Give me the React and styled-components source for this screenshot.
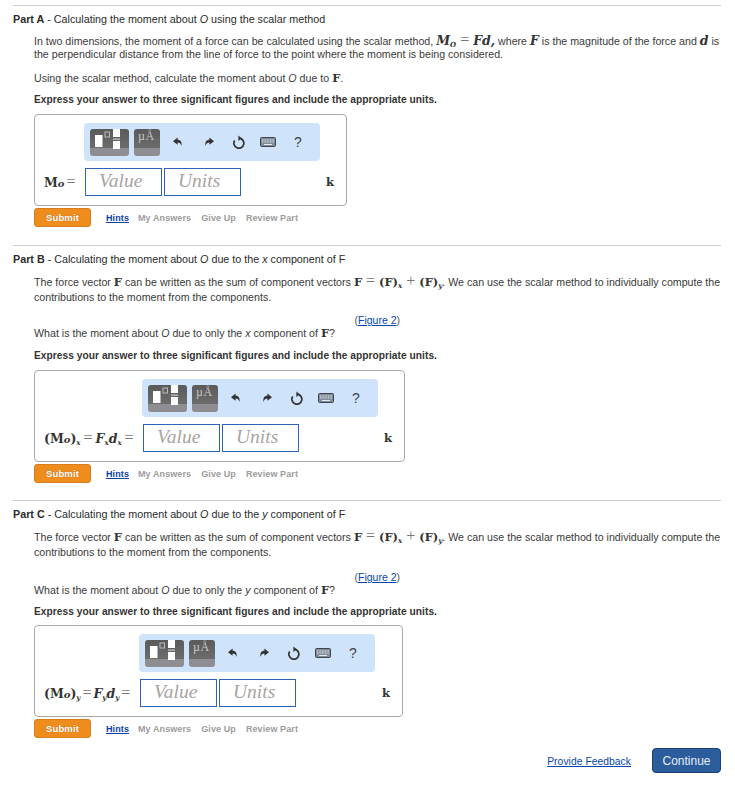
import React from "react";
import styled, { createGlobalStyle } from "styled-components";

const Global = createGlobalStyle`
  html, body { margin: 0; padding: 0; background: #fff; }
  body { font-family: "Liberation Sans", Arial, sans-serif; color: #333; }
`;
const Page = styled.div`
  width: 735px; height: 809px; box-sizing: border-box; padding: 5px 14px 0 13px; overflow: hidden;
`;
const Section = styled.section`
  border-top: 1px solid #ccc;
  height: ${p => p.$height}px;
  box-sizing: border-box;
  padding-top: 6px;
`;
const Title = styled.h2`
  margin: 0; font-size: 10.75px; line-height: 14px; font-weight: 400; color: #2b2b2b;
  strong { font-weight: 700; }
`;
const Body = styled.div`
  margin-left: 21px;
`;
const Para = styled.p`
  margin: ${p => p.$top}px 0 0; font-size: 10.65px; line-height: ${p => p.$line || 13}px; color: #3a3a3a;
`;
const Bold = styled(Para)`
  font-size: 10.2px; font-weight: 700; color: #333; letter-spacing: 0.04px;
`;
const M = styled.span`
  font-family: "DejaVu Serif", serif; font-size: ${p => p.$size || 11.5}px; font-weight: 700; color: #333;
  font-style: ${p => p.$italic ? "italic" : "normal"}; line-height: 1;
  i { font-size: 0.8em; }
  sub { font-size: 7px; line-height: 0; font-style: italic; vertical-align: -2px; }
`;
const Thin = styled.span`
  font-family: "Liberation Serif", serif; font-size: 16px; font-weight: 400; color: #777; line-height: 1; margin: 0 ${p => p.$gap || 1}px;
`;
const FigureRow = styled.div`
  margin: ${p => p.$top}px 0 0; width: 366px; text-align: right; font-size: 10.5px; line-height: 12px; color: #555;
`;
const Link = styled.a`
  color: #0645ad; text-decoration: underline; cursor: pointer;
`;
const AnswerBox = styled.div`
  box-sizing: border-box; width: ${p => p.$width}px; height: ${p => p.$height}px;
  margin-top: ${p => p.$top}px; border: 1px solid #aaa; border-radius: 4px; padding: 8px 0 0;
`;
const Toolbar = styled.div`
  box-sizing: border-box; display: flex; align-items: center; width: 236px; height: 38px; margin-left: ${p => p.$left}px;
  background: #cfe3fb; border-radius: 4px; padding: 0 0 0 6px;
`;
const ToolGroup = styled.button`
  box-sizing: border-box; width: ${p => p.$w}px; height: 27px; margin-right: ${p => p.$gap}px; border: 0; padding: 0; position: relative;
  border-radius: 3px; overflow: hidden; color: #ddd;
  background: linear-gradient(#5a5a5a, #6c6c6c 70%, #8e8e92 70%, #8e8e92);
  font-family: "Liberation Serif", serif; font-size: 11px; display: block;
`;
const MuLabel = styled.span`
  position: absolute; left: 4px; top: 0; font-size: 12px; line-height: 15px; color: #c8c8c8; letter-spacing: 0.5px;
`;
const ToolIcon = styled.span`
  display: flex; justify-content: center; align-items: center; width: ${p => p.$w}px; color: #333;
`;
const QMark = styled.span`
  font-size: 14px; color: #444;
`;
const MathRow = styled.div`
  display: flex; align-items: center; height: 29px; margin-top: 6px;
`;
const MathLabel = styled.div`
  box-sizing: border-box; width: ${p => p.$w}px; padding-left: 9px; white-space: nowrap;
  display: flex; align-items: baseline;
`;
const Slot = styled.div`
  box-sizing: border-box; width: 77px; height: 28px; border: 1px solid #2d62bd; margin-right: 2px;
  font-family: "Liberation Serif", serif; font-style: italic; font-size: 19.5px; line-height: 24px; color: #a9a3a0;
  padding-left: ${p => p.$pad}px;
`;
const Unit = styled.div`
  margin-left: auto; margin-right: ${p => p.$right}px; font-family: "DejaVu Serif", serif; font-weight: 700; font-size: 11.5px; color: #333;
`;
const Actions = styled.div`
  display: flex; align-items: center; margin-top: 2px;
`;
const Submit = styled.button`
  box-sizing: border-box; width: 57px; height: 19px; border: 1px solid #d77f1d; border-radius: 3px; background: #ef8c1e; color: #fff;
  font: 700 9.5px "Liberation Sans", Arial, sans-serif; letter-spacing: 0.15px; padding: 0; margin-right: 15px;
  text-shadow: 0 0 1px rgba(0,0,0,.25);
`;
const Action = styled.span`
  font-size: 9px; font-weight: 700; color: #9c9c9c; margin-right: 10px; letter-spacing: 0.1px;
`;
const HintLink = styled(Link)`
  font-size: 9px; font-weight: 700; margin-right: 9px; letter-spacing: 0.1px; color: #0a3ea8;
`;
const Footer = styled.footer`
  display: flex; justify-content: flex-end; align-items: center; height: 25px;
`;
const Feedback = styled(Link)`
  font-size: 10.3px; margin-right: 21px; margin-top: 1px; letter-spacing: 0.05px;
`;
const Continue = styled.button`
  box-sizing: border-box; width: 69px; height: 25px; border: 1px solid #163f73; border-radius: 4px; background: #2b5c9b; color: #e6eefa;
  font: 400 12px "Liberation Sans", Arial, sans-serif; padding: 0;
`;

const Undo = ({ flip }) => (
  <svg width="12" height="12" viewBox="0 0 12 12" style={flip ? { transform: "scaleX(-1)" } : undefined}>
    <path d="M5.6 1.5 1 5.2l4.6 3.6V6.5c2 0 3.2.7 3.8 3.5.9-3.6-.6-6.2-3.8-6.2z" fill="#333" />
  </svg>
);
const Reload = () => (
  <svg width="14" height="15" viewBox="0 0 14 15">
    <path d="M8 3.2a5 5 0 1 1-4.3 2.2" fill="none" stroke="#333" strokeWidth="1.7" />
    <path d="M7.4.6v5.4l3.2-2.7z" fill="#333" />
  </svg>
);
const Keyboard = () => (
  <svg width="16" height="10" viewBox="0 0 16 10">
    <rect x=".5" y=".5" width="15" height="9" rx="1" fill="#7f8b99" stroke="#3f454c" />
    <path d="M2 3h12M2 5h12" stroke="#e4ebf3" strokeWidth="1" strokeDasharray="1 .6" />
    <path d="M4 7.5h8" stroke="#e4ebf3" />
  </svg>
);
const TemplateIcon = () => (
  <svg width="39" height="27" viewBox="0 0 39 27" style={{ display: "block" }}>
    <rect x="5" y="6" width="7.5" height="12" fill="#fff" />
    <rect x="15" y="3" width="4.5" height="5" fill="none" stroke="#bbb" />
    <rect x="23" y="0" width="7" height="8" fill="#fff" />
    <rect x="23" y="9.5" width="7" height="1.2" fill="#ccc" />
    <rect x="23" y="12" width="7" height="8" fill="#fff" />
  </svg>
);

const Tools = ({ left }) => (
  <Toolbar $left={left}>
    <ToolGroup $w={39} $gap={5} aria-label="templates"><TemplateIcon /></ToolGroup>
    <ToolGroup $w={26} $gap={3} aria-label="units"><MuLabel>µÅ</MuLabel></ToolGroup>
    <ToolIcon $w={30}><Undo /></ToolIcon>
    <ToolIcon $w={31}><Undo flip /></ToolIcon>
    <ToolIcon $w={28}><Reload /></ToolIcon>
    <ToolIcon $w={31}><Keyboard /></ToolIcon>
    <ToolIcon $w={30}><QMark>?</QMark></ToolIcon>
  </Toolbar>
);

const Answer = ({ top, width, height, left, label, labelW, unitRight }) => (
  <>
    <AnswerBox $top={top} $width={width} $height={height}>
      <Tools left={left} />
      <MathRow>
        <MathLabel $w={labelW}>{label}</MathLabel>
        <Slot $pad={13}>Value</Slot>
        <Slot $pad={13}>Units</Slot>
        <Unit $right={unitRight}>k</Unit>
      </MathRow>
    </AnswerBox>
    <Actions>
      <Submit>Submit</Submit>
      <HintLink>Hints</HintLink>
      <Action>My Answers</Action>
      <Action>Give Up</Action>
      <Action>Review Part</Action>
    </Actions>
  </>
);

const Vec = () => <M>F</M>;
const Sum = () => (
  <>
    <Vec /> <Thin>=</Thin> <M>(F)<sub>x</sub></M> <Thin>+</Thin> <M>(F)<sub>y</sub></M>
  </>
);

const ComponentPart = ({ letter, axis, height, boxW, boxH, boxTop, exprTop, left, labelW, label, figTop }) => (
  <Section $height={height}>
    <Title><strong>Part {letter}</strong> - Calculating the moment about <i>O</i> due to the <i>{axis}</i> component of F</Title>
    <Body>
      <Para $top={7} $line={15}>
        The force vector <Vec /> can be written as the sum of component vectors <Sum />. We can use the scalar method to individually compute the contributions to the moment from the components.
      </Para>
      <FigureRow $top={figTop}>(<Link>Figure 2</Link>)</FigureRow>
      <Para $top={1}>What is the moment about <i>O</i> due to only the <i>{axis}</i> component of <Vec />?</Para>
      <Bold $top={exprTop}>Express your answer to three significant figures and include the appropriate units.</Bold>
      <Answer top={boxTop} width={boxW} height={boxH} left={left} labelW={labelW} label={label} unitRight={12} />
    </Body>
  </Section>
);

export default function App() {
  return (
    <Page>
      <Global />
      <Section $height={240}>
        <Title><strong>Part A</strong> - Calculating the moment about <i>O</i> using the scalar method</Title>
        <Body>
          <Para $top={6}>
            In two dimensions, the moment of a force can be calculated using the scalar method, <M $size={12.5} $italic>M<sub>O</sub></M> <Thin>=</Thin> <M $size={12.5} $italic>Fd,</M> where <M $size={12.5} $italic>F</M> is the magnitude of the force and <M $size={12.5} $italic>d</M> is the perpendicular distance from the line of force to the point where the moment is being considered.
          </Para>
          <Para $top={11}>Using the scalar method, calculate the moment about <i>O</i> due to <Vec />.</Para>
          <Bold $top={8}>Express your answer to three significant figures and include the appropriate units.</Bold>
          <Answer
            top={8} width={313} height={92} left={49} labelW={50} unitRight={12}
            label={<><M $size={12.5}>M<i>o</i></M><Thin $gap={2}>=</Thin></>}
          />
        </Body>
      </Section>
      <ComponentPart
        letter="B" axis="x" height={255} boxW={371} boxH={92} boxTop={8} exprTop={9} left={107} labelW={108} figTop={9}
        label={<><M $size={12.5}>(M<i>o</i>)<sub>x</sub></M><Thin $gap={3}>=</Thin><M $size={12.5} $italic>F<sub>x</sub>d<sub>x</sub></M><Thin $gap={3}>=</Thin></>}
      />
      <ComponentPart
        letter="C" axis="y" height={248} boxW={369} boxH={92} boxTop={7} exprTop={8} left={104} labelW={105} figTop={11}
        label={<><M $size={12.5}>(M<i>o</i>)<sub>y</sub></M><Thin $gap={2}>=</Thin><M $size={12.5} $italic>F<sub>y</sub>d<sub>y</sub></M><Thin $gap={2}>=</Thin></>}
      />
      <Footer>
        <Feedback>Provide Feedback</Feedback>
        <Continue>Continue</Continue>
      </Footer>
    </Page>
  );
}
